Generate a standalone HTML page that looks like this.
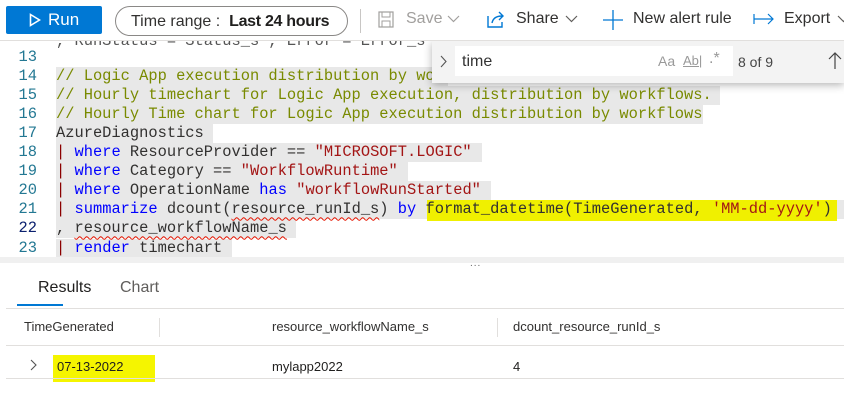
<!DOCTYPE html>
<html><head><style>
*{margin:0;padding:0;box-sizing:border-box}
body{width:844px;height:401px;background:#fff;position:relative;overflow:hidden;font-family:"Liberation Sans",sans-serif;color:#323130}
.tb{position:absolute;left:0;top:0;width:844px;height:41px;background:#fff;border-bottom:1px solid #e1dfdd;z-index:3}
.run{position:absolute;left:6px;top:6px;width:96px;height:28px;background:#0078d4;border-radius:2px;color:#fff;font-size:17px}
.tr{position:absolute;left:115px;top:6px;width:233px;height:30px;border:1px solid #8a8886;border-radius:15px;font-size:16px;padding:6px 0 0 15px;white-space:nowrap}
.ti{position:absolute;font-size:16px;top:10px}
.code{position:absolute;left:0;top:41px;width:844px;height:216px;overflow:hidden;font-family:"Liberation Mono",monospace;font-size:15.4px}
.ln{position:absolute;left:0;height:19.1px;line-height:19.1px;white-space:pre;width:100%}
.ln .n{position:absolute;left:0;width:37px;text-align:right;color:#237893}
.ln .t{position:absolute;left:56px}
.sel{position:absolute;left:56px;height:19.1px;background:#e8e8e8}
.c{color:#798a00}
.k{color:#0000ff}.s{color:#a31515}.p{color:#8b0000}
.sq{text-decoration:underline wavy #e51400;text-decoration-thickness:1px;text-underline-offset:3px}
.find{position:absolute;left:432px;top:41px;width:412px;height:42px;background:#f3f3f3;box-shadow:0 2px 8px rgba(0,0,0,.3);z-index:2}
.fin{position:absolute;left:23px;top:5px;width:278px;height:30px;background:#fff;font-size:16px;padding:7px 0 0 7px;color:#333}
</style></head><body>
<div class="tb">
 <div class="run"><svg style="position:absolute;left:23px;top:7px" width="12" height="14"><path d="M1.5 1.5L10.5 7L1.5 12.5Z" fill="none" stroke="#fff" stroke-width="1.6"/></svg><span style="position:absolute;left:42px;top:4px">Run</span></div>
 <div class="tr">Time range :&nbsp; <span style="color:#201f1e;font-weight:bold;letter-spacing:-0.3px">Last 24 hours</span></div>
 <div style="position:absolute;left:360px;top:9px;width:1px;height:24px;background:#c8c6c4"></div>
 <svg style="position:absolute;left:378px;top:11px" width="16" height="17"><rect x="1" y="1" width="14" height="15" fill="none" stroke="#a19f9d" stroke-width="1.2"/><rect x="4" y="1" width="8" height="5" fill="none" stroke="#a19f9d"/><rect x="4" y="10" width="8" height="6" fill="none" stroke="#a19f9d"/></svg>
 <span class="ti" style="left:406px;color:#a19f9d">Save</span>
 <svg style="position:absolute;left:447px;top:15px" width="13" height="8"><path d="M1 1L6.5 6.5L12 1" fill="none" stroke="#a19f9d" stroke-width="1.2"/></svg>
 <svg style="position:absolute;left:486px;top:9px" width="20" height="20"><path d="M2 7V18H16V13" fill="none" stroke="#0078d4" stroke-width="1.4"/><path d="M6 14C7 9 11 7 16 7M13 3L17 7L13 11" fill="none" stroke="#0078d4" stroke-width="1.4"/></svg>
 <span class="ti" style="left:516px">Share</span>
 <svg style="position:absolute;left:565px;top:15px" width="13" height="8"><path d="M1 1L6.5 6.5L12 1" fill="none" stroke="#605e5c" stroke-width="1.2"/></svg>
 <svg style="position:absolute;left:603px;top:10px" width="20" height="20"><path d="M10 0V20M0 10H20" stroke="#0078d4" stroke-width="1.3"/></svg>
 <span class="ti" style="left:633px">New alert rule</span>
 <svg style="position:absolute;left:753px;top:13px" width="22" height="12"><path d="M1 1V11M1 6H20M15 1L20 6L15 11" fill="none" stroke="#0078d4" stroke-width="1.2"/></svg>
 <span class="ti" style="left:784px">Export</span>
 <svg style="position:absolute;left:837px;top:15px" width="13" height="8"><path d="M1 1L6.5 6.5L12 1" fill="none" stroke="#605e5c" stroke-width="1.2"/></svg>
</div>
<div class="code">
 <div class="ln" style="top:-9px"><span class="t" style="color:#555">, RunStatus = Status_s , Error = Error_s</span></div>
 <div class="sel" style="top:25.6px;width:392px"></div>
 <div class="sel" style="top:44.7px;width:664px"></div>
 <div class="sel" style="top:63.8px;width:647px"></div>
 <div class="sel" style="top:82.9px;width:157px"></div>
 <div class="sel" style="top:102px;width:426px"></div>
 <div class="sel" style="top:121.1px;width:352px"></div>
 <div class="sel" style="top:140.2px;width:435px"></div>
 <div class="sel" style="top:159.3px;width:788px"></div>
 <div class="sel" style="top:178.4px;width:240px"></div>
 <div class="sel" style="top:197.5px;width:176px"></div>
 <div style="position:absolute;left:427px;top:159.3px;width:410px;height:21px;background:#f0f000"></div>
 <div class="ln" style="top:6.5px"><span class="n">13</span></div>
 <div class="ln" style="top:25.6px"><span class="n">14</span><span class="t c">// Logic App execution distribution by workflows</span></div>
 <div class="ln" style="top:44.7px"><span class="n">15</span><span class="t c">// Hourly timechart for Logic App execution, distribution by workflows.</span></div>
 <div class="ln" style="top:63.8px"><span class="n">16</span><span class="t c">// Hourly Time chart for Logic App execution distribution by workflows</span></div>
 <div class="ln" style="top:82.9px"><span class="n">17</span><span class="t">AzureDiagnostics</span></div>
 <div class="ln" style="top:102px"><span class="n">18</span><span class="t"><span class="p">|</span> <span class="k">where</span> ResourceProvider == <span class="s">"MICROSOFT.LOGIC"</span></span></div>
 <div class="ln" style="top:121.1px"><span class="n">19</span><span class="t"><span class="p">|</span> <span class="k">where</span> Category == <span class="s">"WorkflowRuntime"</span></span></div>
 <div class="ln" style="top:140.2px"><span class="n">20</span><span class="t"><span class="p">|</span> <span class="k">where</span> OperationName <span class="k">has</span> <span class="s">"workflowRunStarted"</span></span></div>
 <div class="ln" style="top:159.3px"><span class="n">21</span><span class="t"><span class="p">|</span> <span class="k">summarize</span> dcount(<span class="sq">resource_runId_s</span>) <span class="k">by</span> format_datetime(TimeGenerated, <span class="s">'MM-dd-yyyy'</span>)</span></div>
 <div class="ln" style="top:178.4px"><span class="n" style="color:#0b216f">22</span><span class="t">, <span class="sq">resource_workflowName_s</span></span></div>
 <div class="ln" style="top:197.5px"><span class="n">23</span><span class="t"><span class="p">|</span> <span class="k">render</span> timechart</span></div>
</div>
<div class="find">
 <svg style="position:absolute;left:8px;top:14px" width="8" height="13"><path d="M1 1L6 6.5L1 12" fill="none" stroke="#555" stroke-width="1.1"/></svg>
 <div class="fin">time
  <span style="position:absolute;left:203px;top:7px;font-size:14px;color:#999">Aa</span>
  <span style="position:absolute;left:228px;top:7px;font-size:13px;color:#999;text-decoration:underline">Ab|</span>
  <span style="position:absolute;left:254px;top:4px;font-size:16px;color:#999">.*</span>
 </div>
 <span style="position:absolute;left:306px;top:13px;font-size:14px;color:#444">8 of 9</span>
 <svg style="position:absolute;left:396px;top:11px" width="14" height="18"><path d="M7 17V1M1 7L7 1L13 7" fill="none" stroke="#444" stroke-width="1.2"/></svg>
</div>
<div style="position:absolute;left:0;top:257px;width:844px;height:6px;background:#f0f0f0"></div>
<div style="position:absolute;left:470px;top:258px;font-size:10px;color:#666;letter-spacing:1px">...</div>
<div style="position:absolute;left:38px;top:279px;font-size:16px;color:#201f1e">Results</div>
<div style="position:absolute;left:120px;top:279px;font-size:16px;color:#605e5c">Chart</div>
<div style="position:absolute;left:17px;top:304px;width:46px;height:2px;background:#0078d4"></div>
<div style="position:absolute;left:6px;top:308px;width:838px;height:1px;background:#e1dfdd"></div>
<div style="position:absolute;left:24px;top:319px;font-size:13px;color:#323130">TimeGenerated</div>
<div style="position:absolute;left:159px;top:318px;width:1px;height:19px;background:#e1dfdd"></div>
<div style="position:absolute;left:272px;top:319px;font-size:13px;color:#323130">resource_workflowName_s</div>
<div style="position:absolute;left:497px;top:318px;width:1px;height:19px;background:#e1dfdd"></div>
<div style="position:absolute;left:513px;top:319px;font-size:13px;color:#323130">dcount_resource_runId_s</div>
<div style="position:absolute;left:6px;top:345px;width:838px;height:1px;background:#e1dfdd"></div>
<svg style="position:absolute;left:30px;top:359px" width="7" height="12"><path d="M1 1L6 6L1 11" fill="none" stroke="#555" stroke-width="1.1"/></svg>
<div style="position:absolute;left:53px;top:355px;width:102px;height:27px;background:#f5f500"></div>
<div style="position:absolute;left:57px;top:359px;font-size:13px;color:#201f1e">07-13-2022</div>
<div style="position:absolute;left:272px;top:359px;font-size:13px;color:#201f1e">mylapp2022</div>
<div style="position:absolute;left:513px;top:359px;font-size:13px;color:#201f1e">4</div>
<div style="position:absolute;left:6px;top:378px;width:838px;height:1px;background:#e1dfdd"></div>
</body></html>
